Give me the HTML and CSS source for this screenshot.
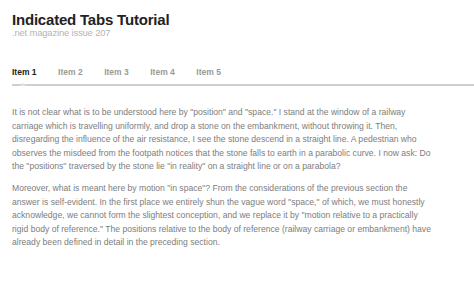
FILE: index.html
```html
<!DOCTYPE html>
<html>
<head>
<meta charset="utf-8">
<link rel="stylesheet" href="styles.css">
</head>
<body>
<div class="page">
  <header class="header">
    <h1 class="title">Indicated Tabs Tutorial</h1>
    <p class="subtitle">.net magazine issue 207</p>
  </header>
  <nav class="tabs">
    <a class="tab active">Item 1</a>
    <a class="tab">Item 2</a>
    <a class="tab">Item 3</a>
    <a class="tab">Item 4</a>
    <a class="tab">Item 5</a>
  </nav>
  <div class="content">
    <p>It is not clear what is to be understood here by "position" and "space." I stand at the window of a railway carriage which is travelling uniformly, and drop a stone on the embankment, without throwing it. Then, disregarding the influence of the air resistance, I see the stone descend in a straight line. A pedestrian who observes the misdeed from the footpath notices that the stone falls to earth in a parabolic curve. I now ask: Do the "positions" traversed by the stone lie "in reality" on a straight line or on a parabola?</p>
    <p>Moreover, what is meant here by motion "in space"? From the considerations of the previous section the answer is self-evident. In the first place we entirely shun the vague word "space," of which, we must honestly acknowledge, we cannot form the slightest conception, and we replace it by "motion relative to a practically rigid body of reference." The positions relative to the body of reference (railway carriage or embankment) have already been defined in detail in the preceding section.</p>
  </div>
</div>
</body>
</html>
```
FILE: styles.css
```css
html, body {
  margin: 0;
  padding: 0;
  background: #ffffff;
}
.page {
  padding: 12px 0 0 12px;
  font-family: "Liberation Sans", Arial, sans-serif;
}
.header {
  margin: 0;
}
.title {
  margin: 0;
  font-size: 15px;
  line-height: 15px;
  font-weight: bold;
  color: #222222;
  letter-spacing: -0.2px;
}
.subtitle {
  margin: 0;
  font-size: 9.5px;
  line-height: 11px;
  color: #b5b5b5;
  letter-spacing: -0.2px;
}
.tabs {
  margin-top: 29px;
  display: flex;
  gap: 21.5px;
  border-bottom: 2px solid #cfcfcf;
  padding-bottom: 7px;
}
.tab {
  position: relative;
  font-size: 8.5px;
  line-height: 10px;
  font-weight: bold;
  color: #9a9a9a;
  text-decoration: none;
}
.tab.active {
  color: #222222;
}
.tab.active::after {
  content: "";
  position: absolute;
  left: 8px;
  bottom: -9px;
  width: 0;
  height: 0;
  border-left: 3px solid transparent;
  border-right: 3px solid transparent;
  border-bottom: 3px solid #e2e2e2;
}
.content {
  padding-top: 20px;
  width: 420px;
}
.content p {
  margin: 0 0 8.5px 0;
  font-size: 8.6px;
  line-height: 13.5px;
  color: #7d7d7d;
}
```
